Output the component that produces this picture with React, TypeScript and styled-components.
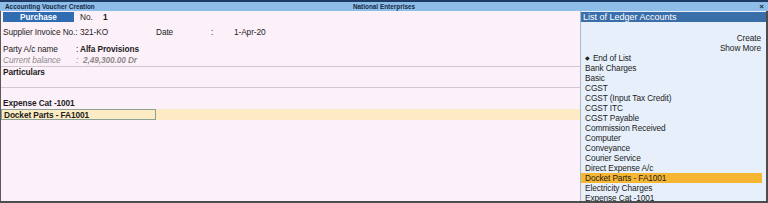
import React from 'react';
import styled, { createGlobalStyle } from 'styled-components';

const GlobalStyle = createGlobalStyle`
  html, body {
    margin: 0;
    padding: 0;
    width: 768px;
    height: 203px;
    overflow: hidden;
    background: #fdf1f9;
  }
`;

const Frame = styled.div`
  width: 768px;
  height: 203px;
  box-sizing: border-box;
  display: flex;
  flex-direction: column;
  overflow: hidden;
  background: #fdf1f9;
  border-bottom: 2px solid #4d4d4d;
  font-family: 'Liberation Sans', Arial, sans-serif;
  font-size: 8.3px;
  letter-spacing: -0.1px;
  color: #1c1c1c;
`;

const TitleBar = styled.div`
  height: 11px;
  box-sizing: border-box;
  border-top: 2px solid #1d3b64;
  background: #8ebee8;
  display: grid;
  grid-template-columns: 1fr auto 1fr;
  align-items: center;
  font-weight: 700;
  font-size: 6.4px;
  letter-spacing: 0;
  color: #13294a;
  line-height: 9px;
`;

const TitleLeft = styled.span`
  padding-left: 5px;
`;

const TitleClose = styled.span`
  justify-self: end;
  padding-right: 4px;
  font-size: 8px;
`;

const Main = styled.div`
  flex: 1;
  display: flex;
  min-height: 0;
`;

const Voucher = styled.div`
  flex: 1;
  display: flex;
  flex-direction: column;
  border-left: 1px solid #5a5a5a;
`;

const Row = styled.div<{ top: number; h?: number }>`
  display: flex;
  align-items: center;
  height: ${(p) => p.h ?? 10}px;
  margin-top: ${(p) => p.top}px;
  padding-left: 2px;
  white-space: nowrap;
`;

const VoucherType = styled.div`
  width: 71px;
  height: 10px;
  background: #2f6cb2;
  color: #fff;
  font-weight: 700;
  font-size: 8.2px;
  letter-spacing: 0;
  display: flex;
  align-items: center;
  justify-content: center;
`;

const Cell = styled.span<{ w?: number; bold?: boolean; muted?: boolean }>`
  display: inline-block;
  width: ${(p) => (p.w ? `${p.w}px` : 'auto')};
  flex: none;
  font-weight: ${(p) => (p.bold ? 700 : 400)};
  font-style: ${(p) => (p.muted ? 'italic' : 'normal')};
  color: ${(p) => (p.muted ? '#8c8a8c' : 'inherit')};
`;

const Divider = styled.div<{ top: number }>`
  height: 1px;
  margin-top: ${(p) => p.top}px;
  background: #d3c6d0;
`;

const ActiveRow = styled.div`
  display: flex;
  height: 11px;
  margin-top: 1px;
  background: #fdebc3;
`;

const InputBox = styled.div`
  width: 155px;
  box-sizing: border-box;
  border: 1px solid #8aa295;
  padding-left: 2px;
  font-weight: 700;
  display: flex;
  align-items: center;
`;

const Panel = styled.div`
  width: 188px;
  box-sizing: border-box;
  display: flex;
  flex-direction: column;
  background: #e7f0fa;
  border-left: 1px solid #a9b8c9;
  border-right: 2px solid #4d4d4d;
`;

const PanelHeader = styled.div`
  height: 10px;
  margin-top: 1px;
  background: #3a6ea9;
  color: #fff;
  font-size: 9px;
  letter-spacing: 0;
  padding-left: 2px;
  display: flex;
  align-items: center;
`;

const Action = styled.div<{ top?: number }>`
  height: 10px;
  margin-top: ${(p) => p.top ?? 0}px;
  text-align: right;
  padding-right: 5px;
  line-height: 10px;
`;

const PanelRule = styled.div`
  height: 1px;
  margin-right: 4px;
  background: #a9b3bd;
`;

const Item = styled.div<{ active?: boolean }>`
  height: 10px;
  line-height: 10px;
  margin-right: 4px;
  padding-left: 4px;
  white-space: nowrap;
  background: ${(p) => (p.active ? '#f6b632' : 'transparent')};
`;

const Bullet = styled.span`
  font-size: 6px;
  margin-right: 3px;
  vertical-align: 1px;
`;

const ledgers = [
  'Bank Charges',
  'Basic',
  'CGST',
  'CGST (Input Tax Credit)',
  'CGST ITC',
  'CGST Payable',
  'Commission Received',
  'Computer',
  'Conveyance',
  'Courier Service',
  'Direct Expense A/c',
  'Docket Parts - FA1001',
  'Electricity Charges',
  'Expense Cat -1001',
];

const App: React.FC = () => (
  <Frame>
    <GlobalStyle />
    <TitleBar>
      <TitleLeft>Accounting Voucher Creation</TitleLeft>
      <span>National Enterprises</span>
      <TitleClose>×</TitleClose>
    </TitleBar>
    <Main>
      <Voucher>
        <Row top={1}>
          <VoucherType>Purchase</VoucherType>
          <Cell w={6} />
          <Cell w={23}>No.</Cell>
          <Cell bold>1</Cell>
        </Row>
        <Row top={5}>
          <Cell w={77}>Supplier Invoice No.:</Cell>
          <Cell w={76}>321-KO</Cell>
          <Cell w={55}>Date</Cell>
          <Cell w={23}>:</Cell>
          <Cell>1-Apr-20</Cell>
        </Row>
        <Row top={7}>
          <Cell w={73}>Party A/c name</Cell>
          <Cell w={4}>:</Cell>
          <Cell bold>Alfa Provisions</Cell>
        </Row>
        <Row top={1}>
          <Cell w={73} muted>
            Current balance
          </Cell>
          <Cell w={7} muted>
            :
          </Cell>
          <Cell muted bold>
            2,49,300.00 Dr
          </Cell>
        </Row>
        <Divider top={1} />
        <Row top={0}>
          <Cell bold>Particulars</Cell>
        </Row>
        <Divider top={10} />
        <Row top={10}>
          <Cell bold>Expense Cat -1001</Cell>
        </Row>
        <ActiveRow>
          <InputBox>Docket Parts - FA1001</InputBox>
        </ActiveRow>
      </Voucher>
      <Panel>
        <PanelHeader>List of Ledger Accounts</PanelHeader>
        <Action top={11}>Create</Action>
        <Action>Show More</Action>
        <PanelRule />
        <Item>
          <Bullet>◆</Bullet>End of List
        </Item>
        {ledgers.map((name) => (
          <Item key={name} active={name === 'Docket Parts - FA1001'}>
            {name}
          </Item>
        ))}
      </Panel>
    </Main>
  </Frame>
);

export default App;
